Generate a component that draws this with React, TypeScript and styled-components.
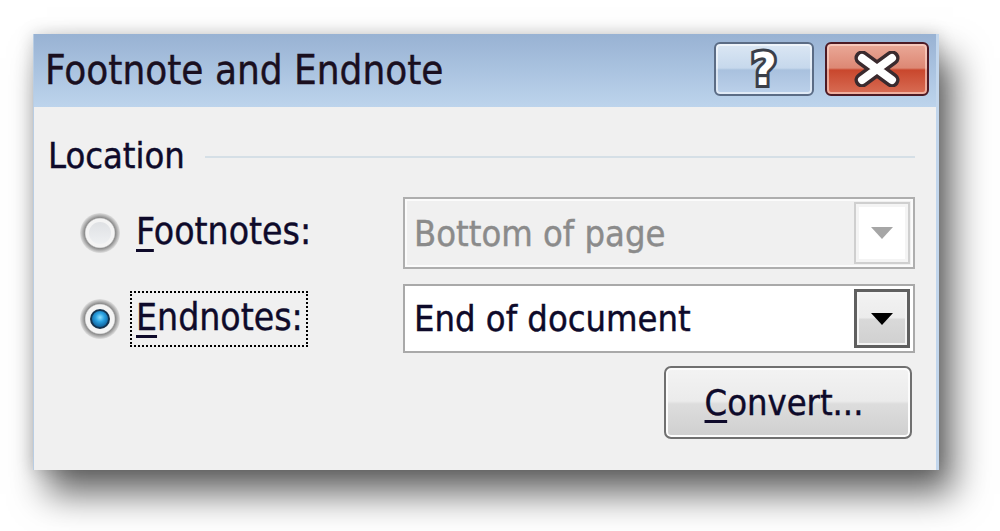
import React from 'react';
import styled, { createGlobalStyle, css } from 'styled-components';

const GlobalStyle = createGlobalStyle`
  html, body {
    margin: 0;
    padding: 0;
    background: #ffffff;
  }
  body {
    font-family: 'DejaVu Sans Condensed', 'DejaVu Sans', Tahoma, sans-serif;
    color: #000;
    -webkit-text-stroke: 0.4px currentColor;
  }
`;

const Page = styled.div`
  width: 1000px;
  height: 531px;
  padding: 34px 0 0 33px;
  box-sizing: border-box;
  overflow: hidden;
`;

const Dialog = styled.div`
  width: 906px;
  height: 436px;
  box-sizing: border-box;
  display: flex;
  flex-direction: column;
  background: #f0f0f0;
  border-left: 1px solid #b9cde3;
  border-right: 3px solid #c2d6ec;
  box-shadow: 0 0 16px rgba(0, 0, 0, 0.18), 14px 24px 34px rgba(0, 0, 0, 0.6);
`;

const TitleBar = styled.div`
  height: 73px;
  flex: none;
  display: flex;
  justify-content: space-between;
  align-items: flex-start;
  padding: 0 7px 0 11px;
  background: linear-gradient(180deg, #98b2d3 0%, #aac3e0 50%, #bdd4ec 100%);
`;

const Title = styled.div`
  font-size: 40px;
  line-height: 73px;
  color: #1a0f1f;
`;

const CaptionButtons = styled.div`
  display: flex;
  gap: 11px;
  margin-top: 8px;
`;

const CaptionButton = styled.div<{ $variant: 'help' | 'close' }>`
  height: 54px;
  box-sizing: border-box;
  border-radius: 6px;
  display: flex;
  align-items: center;
  justify-content: center;
  ${(p) =>
    p.$variant === 'help'
      ? css`
          width: 100px;
          border: 2px solid #5b6c85;
          box-shadow: inset 0 0 0 2px rgba(255, 255, 255, 0.55);
          background: linear-gradient(180deg, #dbe7f4 0%, #c6d8ec 48%, #a9c1de 52%, #bcd1ea 100%);
        `
      : css`
          width: 104px;
          border: 2px solid #4d1a24;
          box-shadow: inset 0 0 0 2px rgba(255, 220, 210, 0.6);
          background: linear-gradient(180deg, #eaa998 0%, #dd8874 48%, #c9472d 52%, #d86d55 100%);
        `}
`;

const HelpMark = styled.span`
  font-family: 'DejaVu Sans', sans-serif;
  font-weight: bold;
  font-size: 44px;
  line-height: 1;
  color: #ffffff;
  -webkit-text-stroke: 6px #3a3f4a;
  paint-order: stroke fill;
  margin-top: 2px;
`;

const Body = styled.div`
  flex: 1;
  display: flex;
  flex-direction: column;
  padding: 27px 21px 0 14px;
`;

const GroupHeader = styled.div`
  display: flex;
  align-items: center;
  font-size: 36px;
  line-height: 44px;
  color: #0e0a2a;
`;

const GroupLine = styled.div`
  flex: 1;
  height: 2px;
  margin-left: 20px;
  margin-top: 2px;
  background: #d5dfe6;
`;

const OptionGrid = styled.div`
  display: grid;
  grid-template-columns: 323px 1fr;
  row-gap: 15px;
  margin: 19px 0 0 32px;
`;

const OptionLabel = styled.label`
  display: flex;
  align-items: center;
  gap: 16px;
  font-size: 37px;
  color: #0e0a2a;
`;

const Radio = styled.span<{ $checked?: boolean }>`
  width: 40px;
  height: 40px;
  flex: none;
  box-sizing: border-box;
  border-radius: 50%;
  display: flex;
  align-items: center;
  justify-content: center;
  background: radial-gradient(circle, #f4f4f4 0 50%, #8e8e8e 55%, #b8b8b8 63%, #e6e6e6 72%, #9a9a9a 80%, #d8d8d8 92%, transparent 100%);

  &::after {
    content: '';
    width: ${(p) => (p.$checked ? '20px' : '22px')};
    height: ${(p) => (p.$checked ? '20px' : '22px')};
    border-radius: 50%;
    box-sizing: border-box;
    ${(p) =>
      p.$checked
        ? css`
            border: 2px solid #14334f;
            background: radial-gradient(circle at 50% 40%, #8fe0ff 0%, #2aa2e2 35%, #0f5c96 80%);
          `
        : css`
            background: linear-gradient(180deg, #dfe1e4 0%, #eef0f2 100%);
          `}
  }
`;

const LabelText = styled.span<{ $focused?: boolean }>`
  padding: 4px 3px 6px 4px;
  border: 2px dotted ${(p) => (p.$focused ? '#000' : 'transparent')};
  line-height: 42px;
  margin-left: -6px;

  u {
    text-decoration-thickness: 3px;
    text-underline-offset: 5px;
  }
`;

const Select = styled.div<{ $disabled?: boolean }>`
  height: ${(p) => (p.$disabled ? '72px' : '69px')};
  box-sizing: border-box;
  display: flex;
  align-items: stretch;
  border: 2px solid ${(p) => (p.$disabled ? '#aeaeae' : '#a9a9a9')};
  box-shadow: inset 0 0 0 2px ${(p) => (p.$disabled ? '#fbfbfb' : '#ffffff')};
  background: ${(p) => (p.$disabled ? '#f0f0f0' : '#ffffff')};
  padding: 3px 3px 3px 0;
`;

const SelectValue = styled.div<{ $disabled?: boolean }>`
  flex: 1;
  display: flex;
  align-items: center;
  padding-left: 9px;
  font-size: 36px;
  color: ${(p) => (p.$disabled ? '#8b8b8b' : '#0e0a2a')};
`;

const ArrowBox = styled.div<{ $disabled?: boolean }>`
  width: 56px;
  box-sizing: border-box;
  display: flex;
  align-items: center;
  justify-content: center;
  ${(p) =>
    p.$disabled
      ? css`
          border: 2px solid #cfcfcf;
          background: #ffffff;
          box-shadow: inset 0 0 0 3px #f4f4f4;
        `
      : css`
          border: 3px solid #5f5f5f;
          box-shadow: inset 0 0 0 2px #f4f4f4;
          background: linear-gradient(180deg, #f2f2f2 0%, #ececec 48%, #d9d9d9 52%, #d0d0d0 100%);
        `}
`;

const ButtonRow = styled.div`
  display: flex;
  justify-content: flex-end;
  margin-top: 13px;
  padding-right: 3px;
`;

const PushButton = styled.button`
  width: 248px;
  height: 73px;
  box-sizing: border-box;
  border: 2px solid #707070;
  border-radius: 7px;
  box-shadow: inset 0 0 0 2px #fcfcfc;
  background: linear-gradient(180deg, #f3f3f3 0%, #ebebeb 48%, #dddddd 52%, #cfcfcf 100%);
  font-family: inherit;
  font-size: 36px;
  color: #0e0a2a;
  padding: 0 8px 0 0;
  -webkit-text-stroke: 0.4px currentColor;

  u {
    text-decoration-thickness: 3px;
    text-underline-offset: 5px;
  }
`;

const ArrowIcon = ({ color }: { color: string }) => (
  <svg width="22" height="12" viewBox="0 0 22 12">
    <path d="M0 0 H22 L11 12 Z" fill={color} />
  </svg>
);

const CloseIcon = () => (
  <svg width="54" height="36" viewBox="0 0 54 36">
    <path d="M12 7 L42 29 M42 7 L12 29" stroke="#3a2a2e" strokeWidth="15" strokeLinecap="round" />
    <path d="M12 7 L42 29 M42 7 L12 29" stroke="#ffffff" strokeWidth="8" strokeLinecap="round" />
  </svg>
);

export default function App() {
  return (
    <>
      <GlobalStyle />
      <Page>
        <Dialog>
          <TitleBar>
            <Title>Footnote and Endnote</Title>
            <CaptionButtons>
              <CaptionButton $variant="help">
                <HelpMark>?</HelpMark>
              </CaptionButton>
              <CaptionButton $variant="close">
                <CloseIcon />
              </CaptionButton>
            </CaptionButtons>
          </TitleBar>
          <Body>
            <GroupHeader>
              Location
              <GroupLine />
            </GroupHeader>
            <OptionGrid>
              <OptionLabel>
                <Radio />
                <LabelText>
                  <u>F</u>ootnotes:
                </LabelText>
              </OptionLabel>
              <Select $disabled>
                <SelectValue $disabled>Bottom of page</SelectValue>
                <ArrowBox $disabled>
                  <ArrowIcon color="#a6a6a6" />
                </ArrowBox>
              </Select>
              <OptionLabel>
                <Radio $checked />
                <LabelText $focused>
                  <u>E</u>ndnotes:
                </LabelText>
              </OptionLabel>
              <Select>
                <SelectValue>End of document</SelectValue>
                <ArrowBox>
                  <ArrowIcon color="#000000" />
                </ArrowBox>
              </Select>
            </OptionGrid>
            <ButtonRow>
              <PushButton>
                <u>C</u>onvert...
              </PushButton>
            </ButtonRow>
          </Body>
        </Dialog>
      </Page>
    </>
  );
}
